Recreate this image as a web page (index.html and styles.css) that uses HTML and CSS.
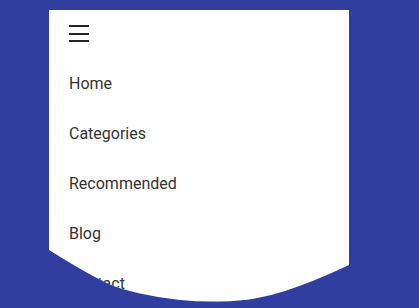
FILE: index.html
```html
<!DOCTYPE html>
<html lang="en">
<head>
<meta charset="utf-8">
<title>Menu</title>
<link rel="stylesheet" href="styles.css">
</head>
<body>
<div class="panel">
  <div class="header">
    <svg class="burger" width="20" height="17" viewBox="0 0 20 17" aria-hidden="true">
      <rect x="0" y="0" width="20" height="2" fill="#222"/>
      <rect x="0" y="8" width="20" height="2" fill="#222"/>
      <rect x="0" y="15" width="20" height="2" fill="#222"/>
    </svg>
  </div>
  <ul class="menu">
    <li>Home</li>
    <li>Categories</li>
    <li>Recommended</li>
    <li>Blog</li>
    <li>Contact</li>
  </ul>
</div>
</body>
</html>
```
FILE: styles.css
```css
html, body {
  margin: 0;
  padding: 0;
}
body {
  background: #303f9f;
  width: 419px;
  height: 308px;
  overflow: hidden;
  font-family: Roboto, "Liberation Sans", sans-serif;
}
.panel {
  margin: 10px 0 0 49px;
  width: 300px;
  height: 298px;
  background: #fff;
  padding-left: 20px;
  box-sizing: border-box;
  clip-path: path('M0 0 H300 V255 L288 260.5 Q276 266 263.5 271 Q251 276 236 281 Q221 286 206 288.5 Q191 291 171 291.5 Q151 292 131 290 Q111 288 91 283.5 Q71 279 61 274.5 Q51 270 38.5 263 Q26 256 13 248 L0 240 Z');
}
.header {
  padding-top: 15px;
  height: 34px;
}
.burger {
  display: block;
}
.menu {
  list-style: none;
  margin: 0;
  padding: 0;
}
.menu li {
  font-size: 16px;
  line-height: 50px;
  color: #333;
}
```
